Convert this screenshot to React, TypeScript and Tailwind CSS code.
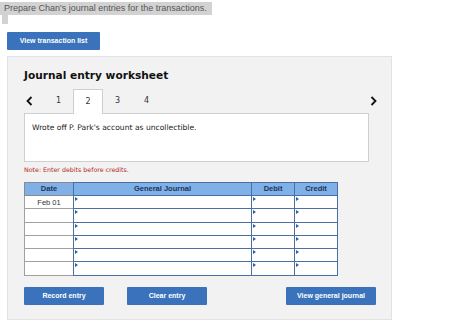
import { Fragment } from 'react';

const rows = ['Feb 01', '', '', '', '', ''];

function Caret() {
  return (
    <span className="absolute left-[1px] top-[1px] h-0 w-0 border-y-[2px] border-l-[3px] border-y-transparent border-l-[#2f5f9e]" />
  );
}

function BlueButton({ label, width }: { label: string; width: string }) {
  return (
    <button
      className={`block h-[18px] ${width} rounded-[1px] bg-[#3a73bb] text-[7px] font-bold leading-[18px] text-white`}
      style={{ fontFamily: '"Liberation Sans", Arial, sans-serif' }}
    >
      {label}
    </button>
  );
}

export default function App() {
  return (
    <div className="h-[331px] w-[474px] bg-white" style={{ fontFamily: '"Liberation Sans", Arial, sans-serif' }}>
      {/* prompt line with selection highlight */}
      <div className="pt-[2px]">
        <div className="w-[212px] whitespace-nowrap bg-[#d2d2d2] pl-[4px] text-[9px] leading-[13px] text-[#555]">
          Prepare Chan's journal entries for the transactions.
        </div>
        <div className="ml-[2px] h-[9px] w-[6px] bg-[#d2d2d2]" />
      </div>

      <div className="ml-[7px] mt-[8px] flex">
        <BlueButton label="View transaction list" width="w-[93px]" />
      </div>

      {/* worksheet panel */}
      <div className="ml-[7px] mt-[6px] h-[264px] w-[385px] border border-[#e2e2e2] bg-[#f2f2f2] pl-[16px] pt-[11px]">
        <h2
          className="text-[10.6px] font-bold leading-[14px] text-[#111]"
          style={{ fontFamily: '"DejaVu Sans", Verdana, sans-serif' }}
        >
          Journal entry worksheet
        </h2>

        {/* tabs */}
        <div className="mt-[7px] flex h-[24px] w-[351px] items-center" style={{ fontFamily: '"DejaVu Sans", Verdana, sans-serif' }}>
          <svg width="7" height="10" viewBox="0 0 7 10" className="ml-[2px]">
            <path d="M5.5 1 L1.5 5 L5.5 9" fill="none" stroke="#111" strokeWidth="1.8" />
          </svg>
          <div className="ml-[11px] flex h-full text-[8px] text-[#333]">
            <div className="flex w-[29px] items-center justify-center">1</div>
            <div className="relative z-10 flex h-[25px] w-[30px] items-center justify-center border border-b-0 border-[#cfcfcf] bg-white">2</div>
            <div className="flex w-[29px] items-center justify-center">3</div>
            <div className="flex w-[29px] items-center justify-center">4</div>
          </div>
          <svg width="7" height="10" viewBox="0 0 7 10" className="ml-auto mr-[-2px]">
            <path d="M1.5 1 L5.5 5 L1.5 9" fill="none" stroke="#111" strokeWidth="1.8" />
          </svg>
        </div>

        {/* description */}
        <div
          className="h-[49px] w-[345px] border border-[#cfcfcf] bg-white pl-[7px] pt-[8px] text-[7.6px] text-[#222]"
          style={{ fontFamily: '"DejaVu Sans", Verdana, sans-serif' }}
        >
          Wrote off P. Park's account as uncollectible.
        </div>

        <div
          className="mt-[4px] text-[6.3px] leading-[8px] text-[#b3261e]"
          style={{ fontFamily: '"DejaVu Sans", Verdana, sans-serif' }}
        >
          Note: Enter debits before credits.
        </div>

        {/* journal table */}
        <div className="mt-[8px] grid w-[314px] grid-cols-[49px_178px_43px_44px] text-[7.5px]">
          <div className="flex h-[14px] items-center justify-center border border-r-0 border-[#8a8a8a] bg-[#7fb0e8] font-bold text-[#1e3458]">Date</div>
          <div className="flex h-[14px] items-center justify-center border border-r-0 border-[#4c6fa3] bg-[#7fb0e8] font-bold text-[#1e3458]">General Journal</div>
          <div className="flex h-[14px] items-center justify-center border border-r-0 border-[#4c6fa3] bg-[#7fb0e8] font-bold text-[#1e3458]">Debit</div>
          <div className="flex h-[14px] items-center justify-center border border-[#4c6fa3] bg-[#7fb0e8] font-bold text-[#1e3458]">Credit</div>
          {rows.map((d, i) => (
            <Fragment key={i}>
              <div className="flex h-[13.3px] items-center justify-center border-b border-l border-[#a0a0a0] bg-white text-[#333]">
                {d}
              </div>
              <div className="relative h-[13.3px] border-b-[1.5px] border-l-[1.5px] border-[#4c6fa3] bg-white">
                <Caret />
              </div>
              <div className="relative h-[13.3px] border-b-[1.5px] border-l-[1.5px] border-[#4c6fa3] bg-white">
                <Caret />
              </div>
              <div className="relative h-[13.3px] border-x-[1.5px] border-b-[1.5px] border-[#4c6fa3] bg-white">
                <Caret />
              </div>
            </Fragment>
          ))}
        </div>

        {/* actions */}
        <div className="mt-[11px] flex w-[352px] items-center">
          <BlueButton label="Record entry" width="w-[80px]" />
          <div className="ml-[23px]">
            <BlueButton label="Clear entry" width="w-[80px]" />
          </div>
          <div className="ml-auto">
            <BlueButton label="View general journal" width="w-[90px]" />
          </div>
        </div>
      </div>
    </div>
  );
}
